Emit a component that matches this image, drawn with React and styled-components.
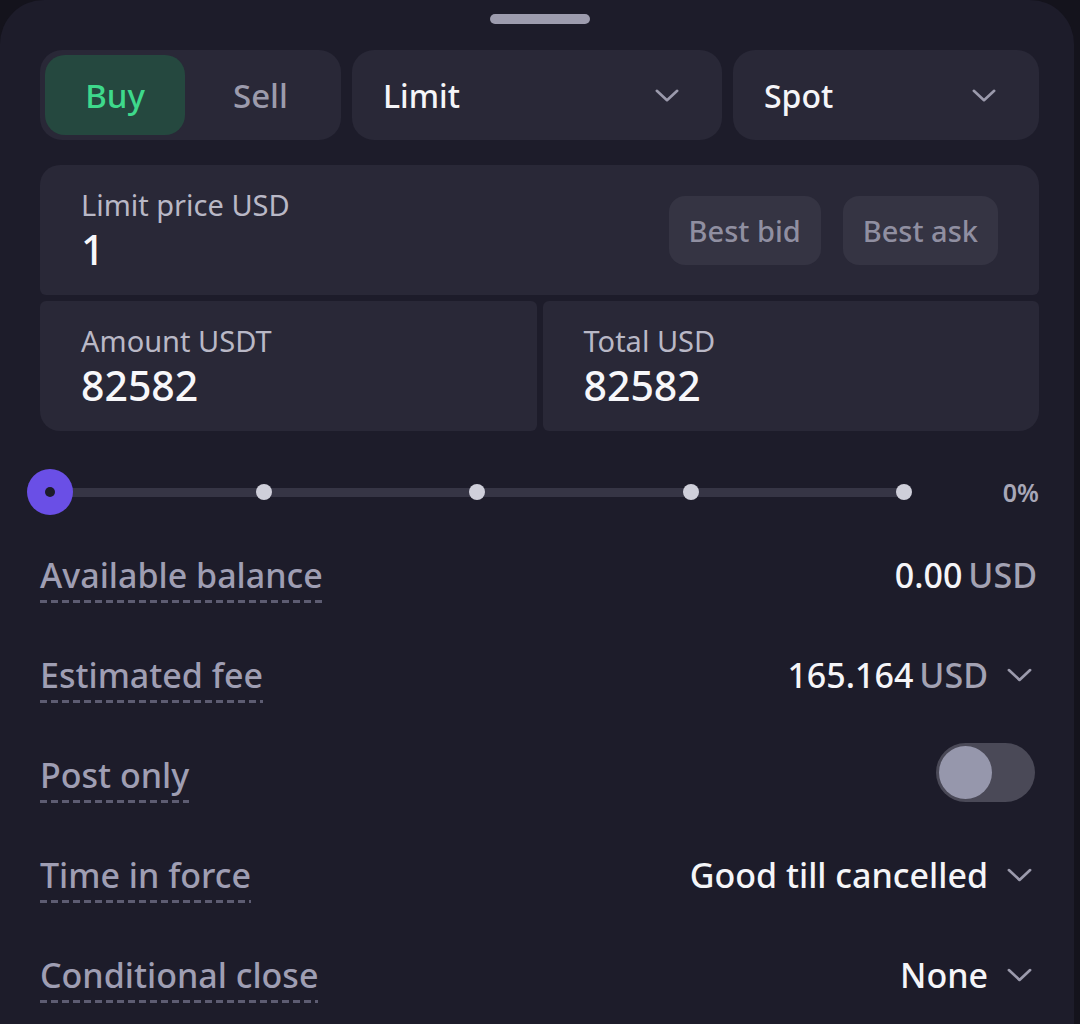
import React from 'react';
import styled, { createGlobalStyle } from 'styled-components';

const GlobalStyle = createGlobalStyle`
    html, body {
        margin: 0;
        padding: 0;
        background: #14131c;
    }
    body {
        font-family: "Noto Sans", "Open Sans", sans-serif;
        -webkit-font-smoothing: antialiased;
    }
`;

const Panel = styled.div`
    box-sizing: border-box;
    width: 1074px;
    height: 1024px;
    overflow: hidden;
    padding: 14px 35px 0 40px;
    background: #1d1c2a;
    border-radius: 44px 44px 0 0;
`;

const Handle = styled.div`
    width: 100px;
    height: 10px;
    margin: 0 auto;
    border-radius: 5px;
    background: #9d9cae;
`;

const TopRow = styled.div`
    display: grid;
    grid-template-columns: 301px 1fr 306px;
    gap: 11px;
    height: 90px;
    margin-top: 26px;
`;

const Segmented = styled.div`
    display: flex;
    align-items: center;
    padding: 5px;
    border-radius: 22px;
    background: #292837;
`;

const Segment = styled.div`
    display: flex;
    align-items: center;
    justify-content: center;
    width: ${p => (p.$active ? '140px' : 'auto')};
    flex: ${p => (p.$active ? 'none' : '1')};
    height: 80px;
    border-radius: 20px;
    background: ${p => (p.$active ? '#25483f' : 'transparent')};
    color: ${p => (p.$active ? '#3ed98b' : '#9c9bac')};
    font-size: 33px;
    font-weight: 500;
`;

const Select = styled.div`
    display: flex;
    align-items: center;
    justify-content: space-between;
    padding: 0 43px 0 31px;
    border-radius: 22px;
    background: #292837;
    color: #f5f5f8;
    font-size: 32px;
    font-weight: 500;
`;

const PriceCard = styled.div`
    display: flex;
    align-items: center;
    justify-content: space-between;
    height: 130px;
    margin-top: 25px;
    padding: 0 41px;
    box-sizing: border-box;
    border-radius: 20px 20px 6px 6px;
    background: #292837;
`;

const Field = styled.div`
    display: flex;
    flex-direction: column;
    padding-top: 6px;
`;

const FieldLabel = styled.div`
    color: #b9b8c6;
    font-size: 29px;
    line-height: 32px;
`;

const FieldValue = styled.div`
    color: #f7f7fa;
    font-size: 41px;
    font-weight: 500;
    line-height: 56px;
`;

const QuickButtons = styled.div`
    display: flex;
    gap: 22px;
`;

const QuickButton = styled.div`
    display: flex;
    align-items: center;
    padding: 0 20px;
    height: 69px;
    border-radius: 16px;
    background: #353443;
    color: #908fa1;
    font-size: 29px;
    font-weight: 500;
`;

const AmountGrid = styled.div`
    display: grid;
    grid-template-columns: 1fr 1fr;
    gap: 6px;
    margin-top: 6px;
`;

const AmountCard = styled.div`
    display: flex;
    align-items: center;
    height: 130px;
    padding: 0 41px;
    box-sizing: border-box;
    border-radius: ${p => (p.$side === 'left' ? '6px 6px 6px 20px' : '6px 6px 20px 6px')};
    background: #292837;
`;

const SliderRow = styled.div`
    display: flex;
    align-items: center;
    height: 46px;
    margin-top: 38px;
`;

const Track = styled.div`
    position: relative;
    width: 854px;
    height: 9px;
    margin-left: 10px;
    border-radius: 5px;
    background: #363545;
`;

const Tick = styled.span`
    position: absolute;
    top: 50%;
    width: 16px;
    height: 16px;
    border-radius: 50%;
    background: #cfcfda;
    transform: translate(-50%, -50%);
`;

const Thumb = styled.span`
    position: absolute;
    left: 0;
    top: 50%;
    width: 46px;
    height: 46px;
    border-radius: 50%;
    background: #6a4fe6;
    transform: translate(-50%, -50%);

    &::after {
        content: '';
        position: absolute;
        left: 18px;
        top: 18px;
        width: 10px;
        height: 10px;
        border-radius: 50%;
        background: #1d1c2a;
    }
`;

const Percent = styled.div`
    margin-left: auto;
    color: #a8a7b7;
    font-size: 25px;
    font-weight: 600;
`;

const Rows = styled.div`
    margin-top: 14px;
`;

const Row = styled.div`
    display: flex;
    align-items: center;
    justify-content: space-between;
    height: 100px;
`;

const RowLabel = styled.span`
    padding-bottom: 8px;
    color: #9f9eb3;
    font-size: 34px;
    font-weight: 500;
    line-height: 40px;
    background-image: repeating-linear-gradient(to right, #5d5c72 0 7px, transparent 7px 11px);
    background-size: 100% 3px;
    background-repeat: no-repeat;
    background-position: left bottom;
`;

const RowValue = styled.div`
    display: flex;
    align-items: center;
    gap: 19px;
    margin: 0 2px 8px 0;
    color: #f5f5f8;
    font-size: 34px;
    font-weight: 500;

    svg {
        margin-right: 5px;
    }
`;

const Unit = styled.span`
    margin-left: 6px;
    color: #a3a2b3;
`;

const Toggle = styled.div`
    display: flex;
    align-items: center;
    box-sizing: border-box;
    width: 99px;
    height: 59px;
    margin: 0 4px 13px 0;
    padding: 0 3px;
    border-radius: 30px;
    background: #4a4957;
`;

const Knob = styled.span`
    width: 53px;
    height: 53px;
    border-radius: 50%;
    background: #9697ac;
`;

const Chevron = ({ size = 24 }) => (
    <svg width={size} height={Math.round(size * 0.55)} viewBox="0 0 24 13" fill="none">
        <polyline points="1.8,1.8 12,11.2 22.2,1.8" stroke="#9b9aac" strokeWidth="2.6" strokeLinecap="round" strokeLinejoin="round" />
    </svg>
);

const App = () => {
    return (
        <>
            <GlobalStyle />
            <Panel>
                <Handle />
                <TopRow>
                    <Segmented>
                        <Segment $active>Buy</Segment>
                        <Segment>Sell</Segment>
                    </Segmented>
                    <Select>Limit<Chevron /></Select>
                    <Select>Spot<Chevron /></Select>
                </TopRow>

                <PriceCard>
                    <Field>
                        <FieldLabel>Limit price USD</FieldLabel>
                        <FieldValue>1</FieldValue>
                    </Field>
                    <QuickButtons>
                        <QuickButton>Best bid</QuickButton>
                        <QuickButton>Best ask</QuickButton>
                    </QuickButtons>
                </PriceCard>

                <AmountGrid>
                    <AmountCard $side="left">
                        <Field>
                            <FieldLabel>Amount USDT</FieldLabel>
                            <FieldValue>82582</FieldValue>
                        </Field>
                    </AmountCard>
                    <AmountCard $side="right">
                        <Field>
                            <FieldLabel>Total USD</FieldLabel>
                            <FieldValue>82582</FieldValue>
                        </Field>
                    </AmountCard>
                </AmountGrid>

                <SliderRow>
                    <Track>
                        {[25, 50, 75, 100].map(p => (
                            <Tick key={p} style={{ left: p + '%' }} />
                        ))}
                        <Thumb />
                    </Track>
                    <Percent>0%</Percent>
                </SliderRow>

                <Rows>
                    <Row>
                        <RowLabel>Available balance</RowLabel>
                        <RowValue><span>0.00<Unit>USD</Unit></span></RowValue>
                    </Row>
                    <Row>
                        <RowLabel>Estimated fee</RowLabel>
                        <RowValue><span>165.164<Unit>USD</Unit></span><Chevron size={25} /></RowValue>
                    </Row>
                    <Row>
                        <RowLabel>Post only</RowLabel>
                        <Toggle><Knob /></Toggle>
                    </Row>
                    <Row>
                        <RowLabel>Time in force</RowLabel>
                        <RowValue>Good till cancelled<Chevron size={25} /></RowValue>
                    </Row>
                    <Row>
                        <RowLabel>Conditional close</RowLabel>
                        <RowValue>None<Chevron size={25} /></RowValue>
                    </Row>
                </Rows>
            </Panel>
        </>
    );
};

export default App;
